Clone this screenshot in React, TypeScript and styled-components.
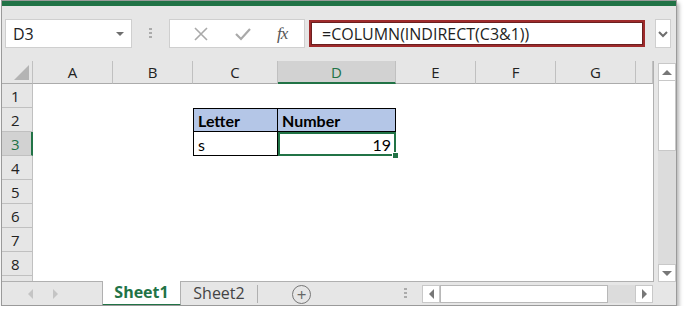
import React from "react";
import styled, { createGlobalStyle } from "styled-components";

const GlobalStyle = createGlobalStyle`
  html, body { margin: 0; padding: 0; background: #fff; }
  body { font-family: "Open Sans", "Noto Sans", sans-serif; }
`;

const GREEN = "#217346";
const UI = "#e6e6e6";
const LINE = "#c0c0c0";

const Window = styled.div`
  margin-left: 1px;
  width: 674px;
  height: 304px;
  border: 1px solid #9a9a9a;
  background: ${UI};
  box-shadow: 2px 3px 4px rgba(0, 0, 0, 0.3);
  display: flex;
  flex-direction: column;
  overflow: hidden;
`;

const TitleStrip = styled.div`
  height: 5px;
  background: ${GREEN};
  flex: none;
`;

const FormulaRow = styled.div`
  height: 55px;
  flex: none;
  display: flex;
  align-items: flex-start;
  padding: 13px 0 0 3px;
  box-sizing: border-box;
`;

const Box = styled.div<{ $w: number }>`
  width: ${(p) => p.$w}px;
  height: 29px;
  box-sizing: border-box;
  background: #fff;
  border: 1px solid #cfcfcf;
  display: flex;
  align-items: center;
  flex: none;
`;

const NameBox = styled(Box)`
  padding: 0 7px 0 7px;
  justify-content: space-between;
  font-size: 16px;
  color: #222;
`;

const Caret = styled.span`
  width: 0;
  height: 0;
  border-left: 4px solid transparent;
  border-right: 4px solid transparent;
  border-top: 4px solid #6e6e6e;
`;

const Grip = styled.div<{ $top: number; $left: number; $right: number }>`
  width: 3px;
  flex: none;
  margin: ${(p) => `${p.$top}px ${p.$right}px 0 ${p.$left}px`};
  display: flex;
  flex-direction: column;
  gap: 2px;
  & > i {
    display: block;
    width: 3px;
    height: 2px;
    background: #ababab;
  }
`;

const FxButtons = styled(Box)`
  justify-content: space-around;
  padding: 0 4px 0 10px;
  margin-right: 4px;
`;

const Fx = styled.span`
  font-family: "Liberation Serif", serif;
  font-style: italic;
  font-size: 17px;
  color: #555;
  letter-spacing: -1px;
`;

const FormulaInput = styled.div`
  width: 336px;
  height: 27px;
  margin-top: 1px;
  box-sizing: border-box;
  background: #fff;
  border: 2px solid #9e2a2b;
  box-shadow: 0 0 0 1px #6b1f1f inset;
  padding-left: 11px;
  display: flex;
  align-items: center;
  font-size: 16px;
  color: #1e1e1e;
  flex: none;
`;

const ExpandBtn = styled(Box)`
  margin-left: 10px;
  justify-content: center;
`;

const Main = styled.div`
  display: flex;
  height: 221px;
  flex: none;
`;

const Sheet = styled.div`
  width: 651px;
  display: flex;
  flex-direction: column;
  background: #fff;
  border-right: 1px solid #b0b0b0;
  border-bottom: 1px solid #b0b0b0;
  overflow: hidden;
`;

const Row = styled.div<{ $h: number }>`
  display: flex;
  height: ${(p) => p.$h}px;
  flex: none;
`;

const Corner = styled.div`
  width: 31px;
  flex: none;
  box-sizing: border-box;
  background: ${UI};
  border-right: 1px solid ${LINE};
  border-bottom: 1px solid #ababab;
  position: relative;
  &::after {
    content: "";
    position: absolute;
    right: 3px;
    bottom: 3px;
    border-left: 15px solid transparent;
    border-bottom: 15px solid #b4b4b4;
  }
`;

const ColHead = styled.div<{ $w: number; $on?: boolean }>`
  width: ${(p) => p.$w}px;
  flex: none;
  box-sizing: border-box;
  background: ${(p) => (p.$on ? "#d2d2d2" : UI)};
  border-right: 1px solid ${LINE};
  border-bottom: ${(p) => (p.$on ? `2px solid ${GREEN}` : "1px solid #ababab")};
  display: flex;
  align-items: center;
  justify-content: center;
  font-size: 15px;
  color: ${(p) => (p.$on ? GREEN : "#222")};
  padding-top: ${(p) => (p.$on ? "1px" : "0")};
`;

const RowHead = styled.div<{ $on?: boolean }>`
  width: 31px;
  flex: none;
  box-sizing: border-box;
  background: ${(p) => (p.$on ? "#d2d2d2" : UI)};
  border-right: ${(p) => (p.$on ? `2px solid ${GREEN}` : `1px solid ${LINE}`)};
  border-bottom: 1px solid ${LINE};
  padding-left: 9px;
  display: flex;
  align-items: center;
  font-size: 15px;
  color: ${(p) => (p.$on ? GREEN : "#222")};
`;

const Cell = styled.div<{ $w: number; $head?: boolean; $right?: boolean; $box?: boolean }>`
  width: ${(p) => p.$w}px;
  flex: none;
  box-sizing: border-box;
  font-family: Lato, "Liberation Sans", sans-serif;
  font-size: 16px;
  color: #000;
  display: flex;
  align-items: center;
  justify-content: ${(p) => (p.$right ? "flex-end" : "flex-start")};
  padding: 1px 3px 0 4px;
  background: ${(p) => (p.$head ? "#b4c6e7" : "transparent")};
  font-weight: ${(p) => (p.$head ? 700 : 400)};
  ${(p) =>
    p.$box
      ? `border-right: 1px solid #000; border-bottom: 1px solid #000;`
      : ""}
`;

const TableRow = styled(Row)<{ $top?: boolean }>`
  & > ${Cell}:nth-child(4) {
    border-left: 1px solid #000;
    ${(p) => (p.$top ? "border-top: 1px solid #000;" : "")}
  }
  & > ${Cell}:nth-child(5) {
    ${(p) => (p.$top ? "border-top: 1px solid #000;" : "")}
  }
`;

const Active = styled(Cell)`
  position: relative;
  outline: 2px solid ${GREEN};
  outline-offset: -2px;
  padding-right: 4px;
  &::after {
    content: "";
    position: absolute;
    right: -4px;
    bottom: -4px;
    width: 5px;
    height: 5px;
    background: ${GREEN};
    border: 1px solid #fff;
  }
`;

const VScroll = styled.div`
  flex: none;
  width: 18px;
  margin: 2px 0 0 4px;
  display: flex;
  flex-direction: column;
`;

const ScrollBtn = styled.div<{ $dir: "up" | "down" | "left" | "right" }>`
  width: 18px;
  height: 18px;
  box-sizing: border-box;
  background: #fff;
  border: 1px solid #c8c8c8;
  display: flex;
  align-items: center;
  justify-content: center;
  flex: none;
  &::before {
    content: "";
    width: 0;
    height: 0;
    ${(p) =>
      p.$dir === "up"
        ? "border-left:5px solid transparent;border-right:5px solid transparent;border-bottom:5px solid #777;"
        : p.$dir === "down"
        ? "border-left:5px solid transparent;border-right:5px solid transparent;border-top:5px solid #777;"
        : p.$dir === "left"
        ? "border-top:5px solid transparent;border-bottom:5px solid transparent;border-right:5px solid #777;"
        : "border-top:5px solid transparent;border-bottom:5px solid transparent;border-left:5px solid #777;"}
  }
`;

const VThumb = styled.div`
  height: 70px;
  background: #fff;
  border: 1px solid #c8c8c8;
  border-top: none;
  box-sizing: border-box;
  flex: none;
`;

const Track = styled.div`
  flex: 1;
  background: #dcdcdc;
`;

const TabBar = styled.div`
  display: flex;
  align-items: stretch;
  height: 24px;
  flex: none;
`;

const TabNav = styled.div`
  width: 100px;
  flex: none;
  display: flex;
  align-items: center;
  gap: 20px;
  padding-left: 26px;
  box-sizing: border-box;
  & > i {
    width: 0;
    height: 0;
    border-top: 5px solid transparent;
    border-bottom: 5px solid transparent;
  }
  & > i:first-child { border-right: 5px solid #c4c4c4; }
  & > i:last-child { border-left: 5px solid #c4c4c4; }
`;

const Tab = styled.div<{ $on?: boolean }>`
  width: ${(p) => (p.$on ? 79 : 77)}px;
  flex: none;
  box-sizing: border-box;
  display: flex;
  align-items: center;
  justify-content: center;
  font-size: 16px;
  white-space: nowrap;
  background: ${(p) => (p.$on ? "#fff" : "transparent")};
  color: ${(p) => (p.$on ? GREEN : "#444")};
  font-weight: ${(p) => (p.$on ? 700 : 400)};
  border-bottom: ${(p) => (p.$on ? `2px solid ${GREEN}` : "none")};
  border-left: ${(p) => (p.$on ? "1px solid #b0b0b0" : "none")};
  border-right: 1px solid #b0b0b0;
  margin: ${(p) => (p.$on ? "-1px 0 0" : "3px 0 3px")};
  padding-bottom: ${(p) => (p.$on ? "1px" : "3px")};
`;

const AddSheet = styled.div`
  width: 19px;
  height: 19px;
  flex: none;
  margin: 3px 0 0 34px;
  border: 1px solid #777;
  border-radius: 50%;
  box-sizing: border-box;
  display: flex;
  align-items: center;
  justify-content: center;
  color: #666;
  font-size: 17px;
  line-height: 1;
`;

const HScroll = styled.div`
  display: flex;
  align-items: center;
  flex: none;
`;

const HThumb = styled.div`
  width: 168px;
  height: 18px;
  box-sizing: border-box;
  background: #fff;
  border: 1px solid #b8b8b8;
`;

const HTrack = styled.div`
  width: 27px;
  height: 18px;
  background: #dcdcdc;
`;

const cols: [string, number][] = [
  ["A", 80],
  ["B", 80],
  ["C", 85],
  ["D", 118],
  ["E", 80],
  ["F", 80],
  ["G", 80],
  ["", 17],
];

const blanks = (from: number) =>
  cols.slice(from).map(([c, w]) => <Cell key={c + w} $w={w} />);

export default function App() {
  return (
    <>
      <GlobalStyle />
      <Window>
        <TitleStrip />
        <FormulaRow>
          <NameBox $w={127}>
            D3
            <Caret />
          </NameBox>
          <Grip $top={9} $left={17} $right={17}>
            <i />
            <i />
            <i />
          </Grip>
          <FxButtons $w={136}>
            <svg width="16" height="16" viewBox="0 0 16 16">
              <path d="M2 2 L14 14 M14 2 L2 14" stroke="#a9a9a9" strokeWidth="1.6" fill="none" />
            </svg>
            <svg width="18" height="16" viewBox="0 0 18 16">
              <path d="M2 8 L7 13 L16 3" stroke="#a9a9a9" strokeWidth="2.2" fill="none" />
            </svg>
            <Fx>fx</Fx>
          </FxButtons>
          <FormulaInput>=COLUMN(INDIRECT(C3&amp;1))</FormulaInput>
          <ExpandBtn $w={16}>
            <svg width="10" height="8" viewBox="0 0 10 8">
              <path d="M1 2 L5 6 L9 2" stroke="#6e6e6e" strokeWidth="2" fill="none" />
            </svg>
          </ExpandBtn>
        </FormulaRow>
        <Main>
          <Sheet>
            <Row $h={23}>
              <Corner />
              {cols.map(([c, w]) => (
                <ColHead key={c + w} $w={w} $on={c === "D"}>
                  {c}
                </ColHead>
              ))}
            </Row>
            <Row $h={24}>
              <RowHead>1</RowHead>
              {blanks(0)}
            </Row>
            <TableRow $h={24} $top>
              <RowHead>2</RowHead>
              {blanks(0).slice(0, 2)}
              <Cell $w={85} $head $box>
                Letter
              </Cell>
              <Cell $w={118} $head $box>
                Number
              </Cell>
              {blanks(4)}
            </TableRow>
            <TableRow $h={24}>
              <RowHead $on>3</RowHead>
              {blanks(0).slice(0, 2)}
              <Cell $w={85} $box>
                s
              </Cell>
              <Active $w={118} $right $box>
                19
              </Active>
              {blanks(4)}
            </TableRow>
            {[4, 5, 6, 7, 8].map((n) => (
              <Row key={n} $h={24}>
                <RowHead>{n}</RowHead>
                {blanks(0)}
              </Row>
            ))}
            {/* partial row 9, only its top edge is visible */}
            <Row $h={24}>
              <RowHead />
              {blanks(0)}
            </Row>
          </Sheet>
          <VScroll>
            <ScrollBtn $dir="up" />
            <VThumb />
            <Track />
            <ScrollBtn $dir="down" />
          </VScroll>
        </Main>
        <TabBar>
          <TabNav>
            <i />
            <i />
          </TabNav>
          <Tab $on>Sheet1</Tab>
          <Tab>Sheet2</Tab>
          <AddSheet>+</AddSheet>
          <Grip $top={6} $left={93} $right={15}>
            <i />
            <i />
            <i />
          </Grip>
          <HScroll>
            <ScrollBtn $dir="left" />
            <HThumb />
            <HTrack />
            <ScrollBtn $dir="right" />
          </HScroll>
        </TabBar>
      </Window>
    </>
  );
}
